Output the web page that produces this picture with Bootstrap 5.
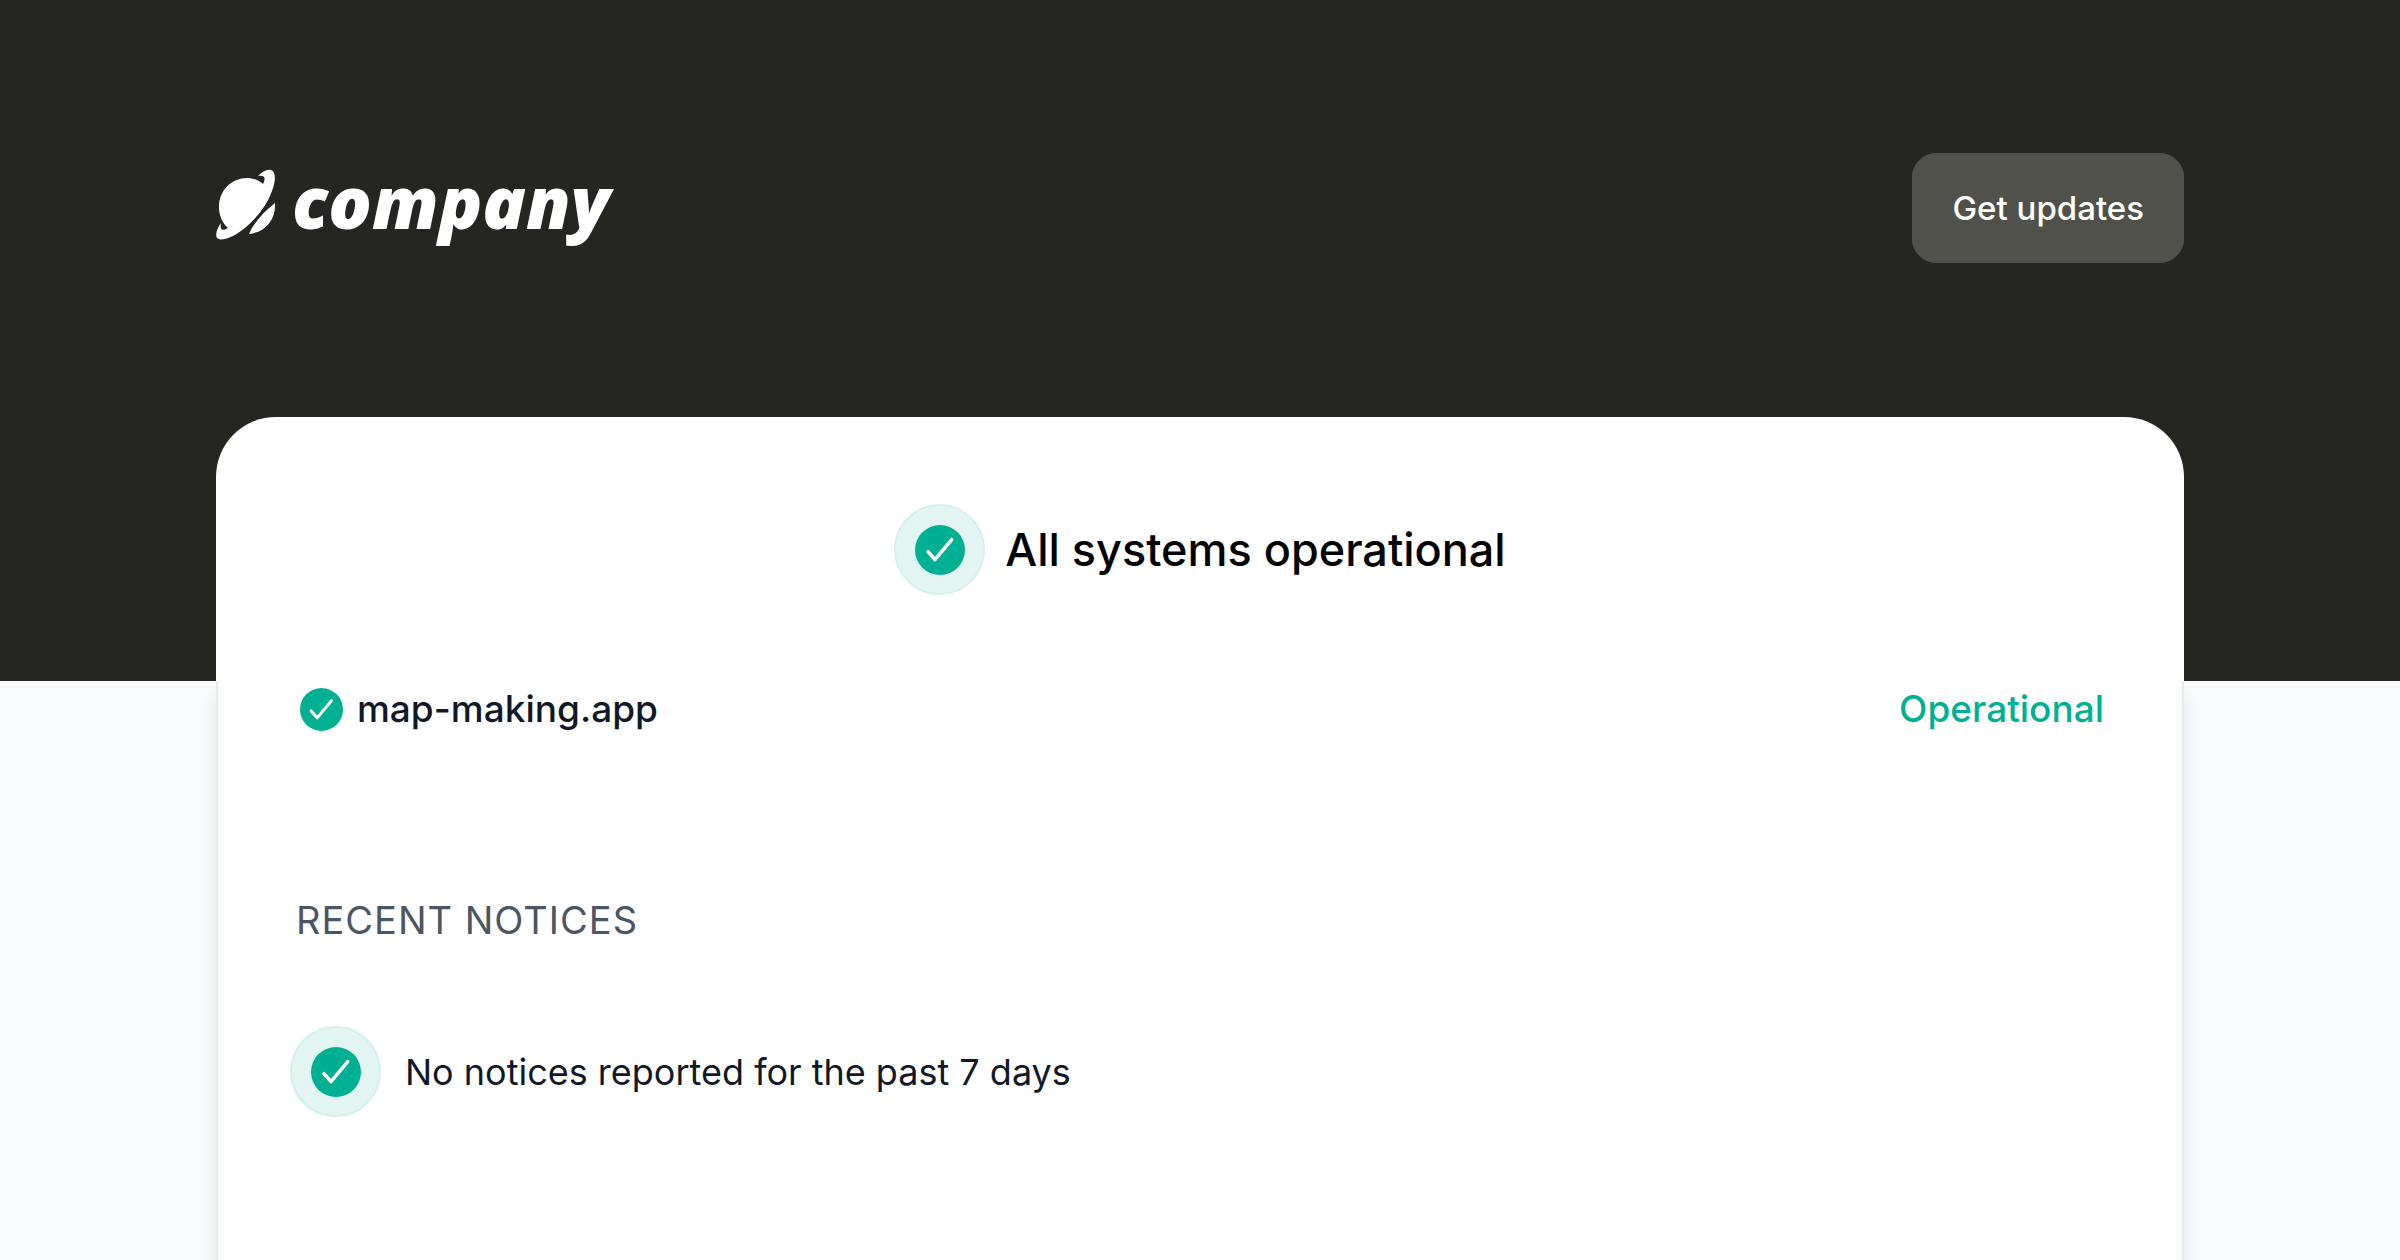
<!DOCTYPE html>
<html lang="en">
<head>
<meta charset="utf-8">
<meta name="viewport" content="width=device-width, initial-scale=1">
<title>Company status</title>
<link href="https://cdn.jsdelivr.net/npm/bootstrap@5.3.0/dist/css/bootstrap.min.css" rel="stylesheet">
<style>
body { font-family: Inter, "Liberation Sans", sans-serif; background: #f9fafc; color: #111827; line-height: 1.5; }
.page-head { background: #252622; }
.gutter { padding-left: 9%; padding-right: 9%; }
.topbar { padding-top: 153px; padding-bottom: 154px; }
.brand-link { gap: 16px; color: #fff; padding-bottom: 6px; }
.brand-name { font-family: "Open Sans", sans-serif; font-weight: 800; font-style: italic; font-size: 72px; line-height: 80px; padding-bottom: 8px; }
.btn-updates { --bs-btn-color: #fff; --bs-btn-bg: #50514b; --bs-btn-border-color: #50514b; --bs-btn-hover-color: #fff; --bs-btn-hover-bg: #5c5d57;
  --bs-btn-font-size: 33px; --bs-btn-font-weight: 500; --bs-btn-line-height: 48px; --bs-btn-padding-x: 39px; --bs-btn-padding-y: 30px; --bs-btn-border-radius: 24px; }
.panel-top { background: #fff; border-radius: 60px 60px 0 0; padding: 87px 72px 86px; gap: 20px; }
.panel-rest { background: #fff; border: solid #e7e9ee; border-width: 0 2px; padding: 0 78px 80px 72px; box-shadow: 0 16px 14px rgba(17, 24, 39, .09); }
.headline { font-size: 45px; font-weight: 500; line-height: 90px; color: #000; }
.halo { width: 91px; height: 91px; border: 2px solid #d6f1ec; background: #e2f5f2; }
.service { font-size: 37px; font-weight: 500; line-height: 56px; }
.service-row { padding-left: 10px; }
.service-name { gap: 14px; }
.teal { color: #00b093; }
.section-title { font-size: 38px; font-weight: 400; line-height: 56px; letter-spacing: 1px; color: #4b5563; margin: 155px 0 78px; padding-left: 6px; }
.notice { font-size: 36px; }
</style>
</head>
<body>
<svg class="d-none">
  <symbol id="tick" viewBox="0 0 50 50"><circle cx="25" cy="25" r="25" fill="#00b093"/><path d="M13 26.700L20 34.700L36.700 14.700" fill="none" stroke="#fff" stroke-width="3.500" stroke-linecap="round" stroke-linejoin="round"/></symbol>
</svg>
<div class="d-flex flex-column min-vh-100">
  <header class="page-head gutter">
    <nav class="topbar d-flex justify-content-between align-items-center">
      <a href="#" class="brand-link d-flex align-items-center text-decoration-none">
        <svg width="60" height="72" viewBox="0 0 60 72" fill="#fff" aria-hidden="true">
          <path d="M42 7C46 3 51 0 55 1C60 3 60 11 56 22C50 39 36 55 22 64C13 70 4 72 1 69C-1 66 1 59 5 54C4 60 5 63 12 59C6 54 3 46 3 38C3 21 16 9 31 9C37 9 43 11 47 15C50 9 49 6 42 7Z"/>
          <path d="M59 34C60 50 50 63 33 65C38 53 48 43 59 34Z"/>
        </svg>
        <span class="brand-name">company</span>
      </a>
      <button type="button" class="btn btn-updates">Get updates</button>
    </nav>
    <div class="panel-top d-flex justify-content-center align-items-center">
      <span class="halo rounded-circle d-flex align-items-center justify-content-center"><svg width="50" height="50"><use href="#tick"/></svg></span>
      <h1 class="headline mb-0">All systems operational</h1>
    </div>
  </header>
  <main class="gutter flex-grow-1 d-flex flex-column">
    <div class="panel-rest flex-grow-1">
      <div class="service service-row d-flex align-items-center justify-content-between">
        <div class="service-name d-flex align-items-center"><svg width="43" height="43"><use href="#tick"/></svg><span>map-making.app</span></div>
        <span class="teal">Operational</span>
      </div>
      <h2 class="section-title text-uppercase">Recent notices</h2>
      <div class="notice d-flex align-items-center gap-4">
        <span class="halo rounded-circle d-flex align-items-center justify-content-center"><svg width="50" height="50"><use href="#tick"/></svg></span>
        <span>No notices reported for the past 7 days</span>
      </div>
    </div>
  </main>
</div>
<script src="https://cdn.jsdelivr.net/npm/bootstrap@5.3.0/dist/js/bootstrap.bundle.min.js"></script>
</body>
</html>
